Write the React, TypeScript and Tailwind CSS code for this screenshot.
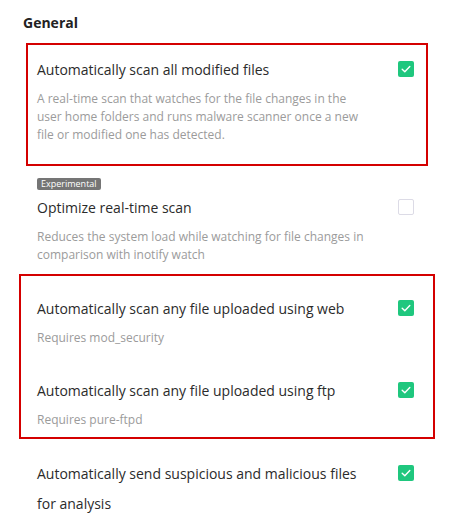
import type { ReactNode } from "react";

function Checkbox({ checked }: { checked: boolean }) {
  if (!checked) {
    return <span className="mt-[6px] block h-4 w-4 shrink-0 rounded-[2px] border border-[#dcdbe6] bg-white" />;
  }
  return (
    <span className="mt-[6px] flex h-4 w-4 shrink-0 items-center justify-center rounded-[2px] bg-[#1fc77e]">
      <svg viewBox="0 0 16 16" className="h-4 w-4" fill="none">
        <path d="M4.2 8.3l2.6 2.5 5-5.3" stroke="white" strokeWidth="1.4" strokeLinecap="round" strokeLinejoin="round" />
      </svg>
    </span>
  );
}

function Setting({
  title,
  description,
  checked,
  badge,
}: {
  title: ReactNode;
  description?: ReactNode;
  checked: boolean;
  badge?: string;
}) {
  return (
    <div className="w-[377px]">
      {badge && (
        <span className="mb-[3px] block h-3 w-fit rounded-[2px] bg-[#757575] px-[4px] text-[9px] leading-3 text-white">
          {badge}
        </span>
      )}
      <div className="flex items-start justify-between gap-4">
        <div className="text-[14px] leading-[30px] text-[#2b2b2b]">{title}</div>
        <Checkbox checked={checked} />
      </div>
      {description && (
        <p className="mt-[5px] w-[330px] text-[12px] leading-[18px] text-[#9b9b9b]">{description}</p>
      )}
    </div>
  );
}

export default function App() {
  return (
    <div className="min-h-screen bg-white pl-[23px] pt-[13px] font-['Open_Sans',sans-serif]">
      <h2 className="text-[14px] font-bold leading-[20px] text-[#222]">General</h2>

      <div className="ml-[3px] mt-[10px] w-[402px] border-2 border-[#d40000] pb-[20px] pl-[9px] pr-[12px] pt-[10px]">
        <Setting
          checked
          title="Automatically scan all modified files"
          description="A real-time scan that watches for the file changes in the user home folders and runs malware scanner once a new file or modified one has detected."
        />
      </div>

      <div className="ml-[14px] mt-[12px]">
        <Setting
          badge="Experimental"
          checked={false}
          title="Optimize real-time scan"
          description="Reduces the system load while watching for file changes in comparison with inotify watch"
        />
      </div>

      <div className="ml-[-4px] mt-[10px] w-[416px] border-2 border-[#d40000] pb-[8px] pl-[16px] pr-[19px] pt-[18px]">
        <Setting checked title="Automatically scan any file uploaded using web" description="Requires mod_security" />
        <div className="mt-[29px]">
          <Setting checked title="Automatically scan any file uploaded using ftp" description="Requires pure-ftpd" />
        </div>
      </div>

      <div className="ml-[14px] mt-[20px]">
        <Setting
          checked
          title={
            <>
              Automatically send suspicious and malicious files
              <br />
              for analysis
            </>
          }
        />
      </div>
    </div>
  );
}
